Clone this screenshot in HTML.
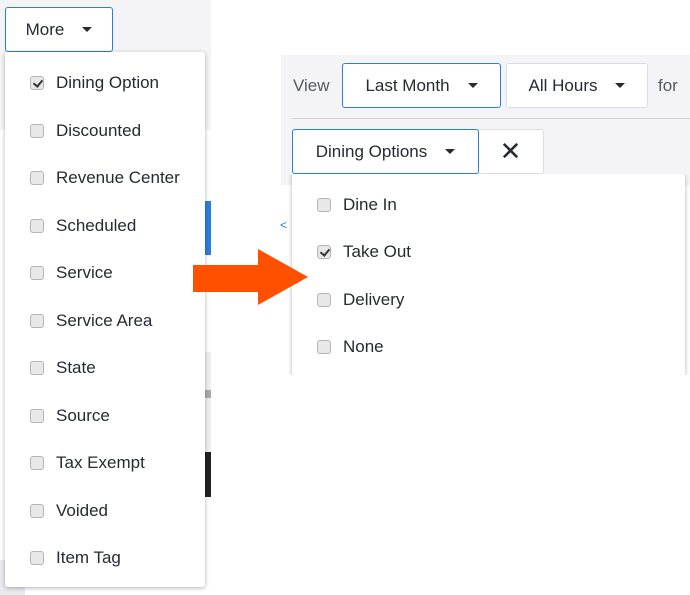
<!DOCTYPE html>
<html><head><style>
*{margin:0;padding:0;box-sizing:border-box}
body{width:690px;height:595px;background:#fff;position:relative;overflow:hidden;font-family:"Liberation Sans",sans-serif;color:#252a33}
.abs{position:absolute}
.btn{position:absolute;background:#fff;border:1px solid #dcdde0;border-radius:3px;font-size:17px;display:flex;align-items:center;justify-content:center}
.blue{border-color:#2b7de1}
.caret{display:inline-block;width:0;height:0;border-left:5px solid transparent;border-right:5px solid transparent;border-top:5px solid #252a33;margin-left:18px}
.menu{position:absolute;background:#fff;border-radius:3px;box-shadow:0 1px 4px rgba(0,0,0,.3)}
.item{position:absolute;left:25px;font-size:17px;display:flex;align-items:center;height:20px}
.cb{width:14px;height:14px;border:1px solid #b5b5b5;border-radius:3px;background:#e8e8e8;margin-right:12px;position:relative}
.cb.on::after{content:"";position:absolute;left:4px;top:1px;width:4px;height:7px;border:solid #333;border-width:0 2px 2px 0;transform:rotate(40deg)}
</style></head><body>
<div class="abs" style="left:0;top:0;width:211px;height:130px;background:#f4f4f6"></div>
<div class="abs" style="left:205px;top:201px;width:6px;height:54px;background:#2b7de1"></div>
<div class="abs" style="left:205px;top:352px;width:6px;height:140px;background:#eeeef0"></div>
<div class="abs" style="left:205px;top:390px;width:6px;height:8px;background:#a8a8ac"></div>
<div class="abs" style="left:205px;top:452px;width:6px;height:45px;background:#222"></div>
<div class="abs" style="left:0;top:560px;width:25px;height:35px;background:#e9e9ee"></div>

<div class="btn blue" style="left:5px;top:7px;width:108px;height:45px">More<span class="caret"></span></div>
<div class="menu" style="left:5px;top:52px;width:200px;height:535px">
<div class="item" style="top:21px"><span class="cb on"></span>Dining Option</div>
<div class="item" style="top:69px"><span class="cb"></span>Discounted</div>
<div class="item" style="top:116px"><span class="cb"></span>Revenue Center</div>
<div class="item" style="top:164px"><span class="cb"></span>Scheduled</div>
<div class="item" style="top:211px"><span class="cb"></span>Service</div>
<div class="item" style="top:259px"><span class="cb"></span>Service Area</div>
<div class="item" style="top:306px"><span class="cb"></span>State</div>
<div class="item" style="top:354px"><span class="cb"></span>Source</div>
<div class="item" style="top:401px"><span class="cb"></span>Tax Exempt</div>
<div class="item" style="top:449px"><span class="cb"></span>Voided</div>
<div class="item" style="top:496px"><span class="cb"></span>Item Tag</div>
</div>

<div class="abs" style="left:281px;top:55px;width:409px;height:130px;background:#f4f4f6"></div>
<div class="abs" style="left:292px;top:118px;width:398px;height:1px;background:#d0d1d4"></div>
<div class="abs" style="left:293px;top:76px;font-size:17px;color:#555a63">View</div>
<div class="btn blue" style="left:342px;top:63px;width:159px;height:45px">Last Month<span class="caret"></span></div>
<div class="btn" style="left:506px;top:63px;width:142px;height:45px">All Hours<span class="caret"></span></div>
<div class="abs" style="left:658px;top:76px;font-size:17px;color:#555a63">for</div>
<div class="btn" style="left:477px;top:129px;width:67px;height:45px;font-size:26px">✕</div>
<div class="btn blue" style="left:292px;top:129px;width:187px;height:45px">Dining Options<span class="caret"></span></div>
<div class="abs" style="left:280px;top:218px;font-size:12px;color:#2b7de1">&lt;</div>
<div class="abs" style="left:288px;top:174px;width:402px;height:201px;overflow:hidden">
<div class="menu" style="left:4px;top:0;width:393px;height:230px;border-radius:0 3px 0 0">
<div class="item" style="top:21px"><span class="cb"></span>Dine In</div>
<div class="item" style="top:68px"><span class="cb on"></span>Take Out</div>
<div class="item" style="top:116px"><span class="cb"></span>Delivery</div>
<div class="item" style="top:163px"><span class="cb"></span>None</div>
</div></div>
<svg class="abs" style="left:0;top:0" width="690" height="595"><polygon points="193,265 258,265 258,249 308,277 258,305 258,292 193,292" fill="#ff5000"/></svg>
</body></html>
